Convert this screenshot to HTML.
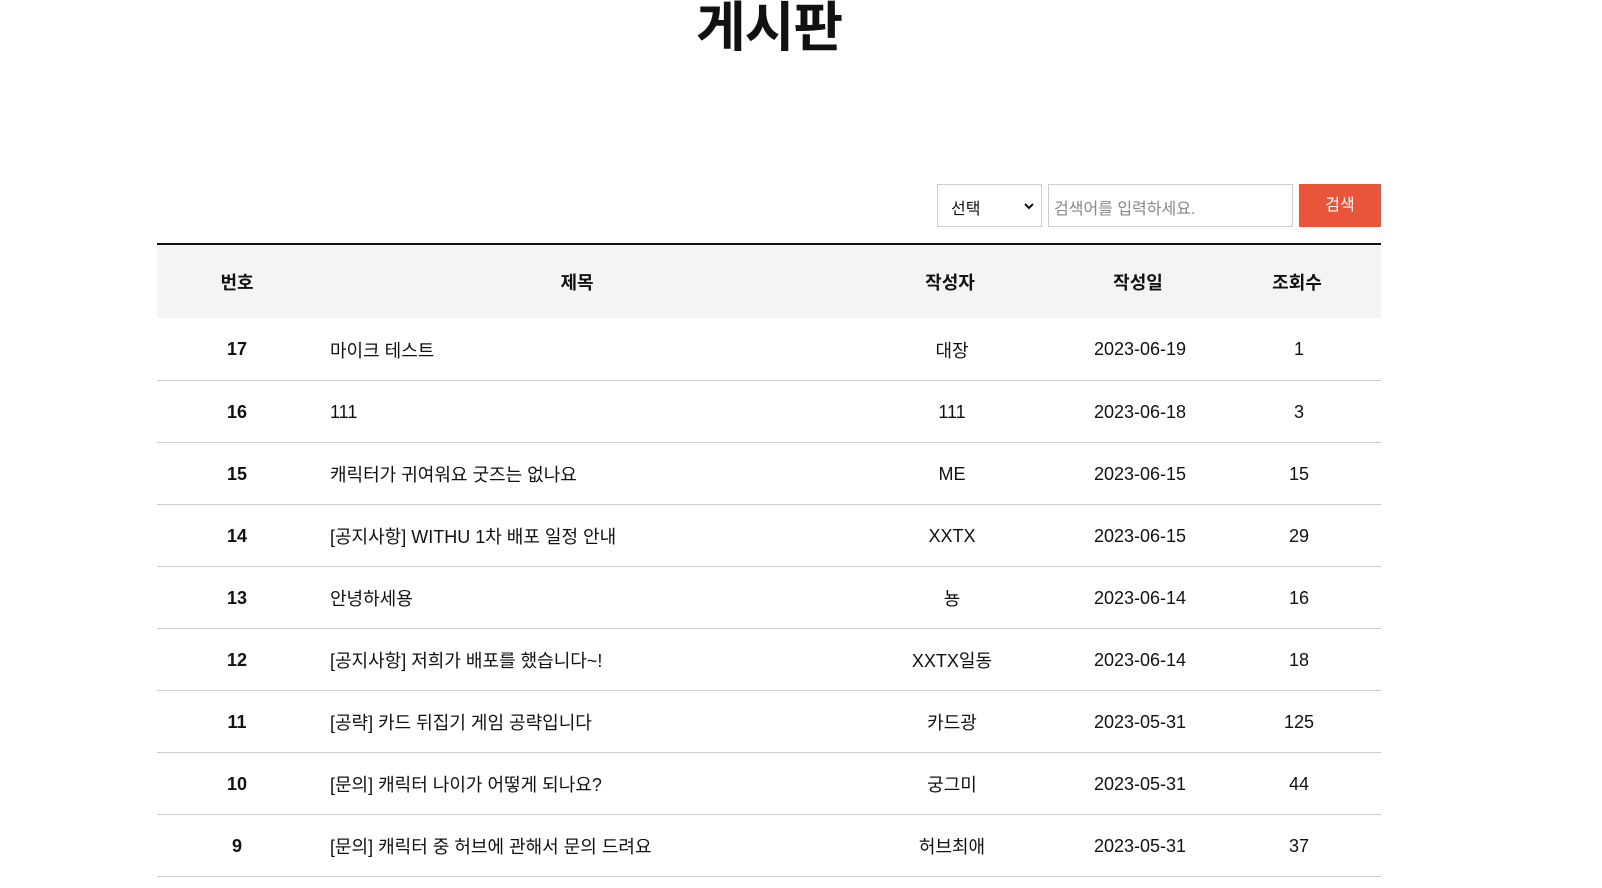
<!DOCTYPE html>
<html><head><meta charset="utf-8"><style>
*{margin:0;padding:0;box-sizing:border-box}
body{width:1602px;height:888px;overflow:hidden;background:#fff;font-family:"Liberation Sans","Noto Sans CJK KR",sans-serif;color:#111;position:relative}
h1{position:absolute;left:157px;width:1224px;top:-5px;text-align:center;font-size:54px;font-weight:bold;line-height:66px;letter-spacing:-1px}
.sel{position:absolute;left:937px;top:184px;width:105px;height:43px;border:1px solid #ccc;font-size:16px;padding:10px 0 0 13px}
.sel svg{position:absolute;right:6px;top:17px}
.inp{position:absolute;left:1048px;top:184px;width:245px;height:43px;border:1px solid #ccc;font-size:16px;color:#888;padding:10px 0 0 5px}
.btn{position:absolute;left:1299px;top:184px;width:82px;height:43px;background:#e8553a;color:#fff;font-size:16px;text-align:center;line-height:43px}
table{position:absolute;left:157px;top:243px;width:1224px;border-collapse:collapse;border-top:2px solid #111}
th{background:#f4f4f4;height:74px;font-size:18px;font-weight:bold}
td{height:62px;border-bottom:1px solid #ccc;font-size:18px;text-align:center;padding-top:2px}
td.n{font-weight:bold}
td.t{text-align:left;padding-left:13px}
td:nth-child(3),td:nth-child(4),td:nth-child(5){padding-left:4px}
</style></head><body>
<h1>게시판</h1>
<div class="sel">선택<svg width="12" height="8" viewBox="0 0 12 8"><path d="M2 2l4 4 4-4" fill="none" stroke="#111" stroke-width="2"/></svg></div>
<div class="inp">검색어를 입력하세요.</div>
<div class="btn">검색</div>
<table>
<colgroup><col style="width:160px"><col style="width:520px"><col style="width:226px"><col style="width:150px"><col style="width:168px"></colgroup>
<tr><th>번호</th><th>제목</th><th>작성자</th><th>작성일</th><th>조회수</th></tr>
<tr><td class="n">17</td><td class="t">마이크 테스트</td><td>대장</td><td>2023-06-19</td><td>1</td></tr>
<tr><td class="n">16</td><td class="t">111</td><td>111</td><td>2023-06-18</td><td>3</td></tr>
<tr><td class="n">15</td><td class="t">캐릭터가 귀여워요 굿즈는 없나요</td><td>ME</td><td>2023-06-15</td><td>15</td></tr>
<tr><td class="n">14</td><td class="t">[공지사항] WITHU 1차 배포 일정 안내</td><td>XXTX</td><td>2023-06-15</td><td>29</td></tr>
<tr><td class="n">13</td><td class="t">안녕하세용</td><td>뇽</td><td>2023-06-14</td><td>16</td></tr>
<tr><td class="n">12</td><td class="t">[공지사항] 저희가 배포를 했습니다~!</td><td>XXTX일동</td><td>2023-06-14</td><td>18</td></tr>
<tr><td class="n">11</td><td class="t">[공략] 카드 뒤집기 게임 공략입니다</td><td>카드광</td><td>2023-05-31</td><td>125</td></tr>
<tr><td class="n">10</td><td class="t">[문의] 캐릭터 나이가 어떻게 되나요?</td><td>궁그미</td><td>2023-05-31</td><td>44</td></tr>
<tr><td class="n">9</td><td class="t">[문의] 캐릭터 중 허브에 관해서 문의 드려요</td><td>허브최애</td><td>2023-05-31</td><td>37</td></tr>
</table>
</body></html>
